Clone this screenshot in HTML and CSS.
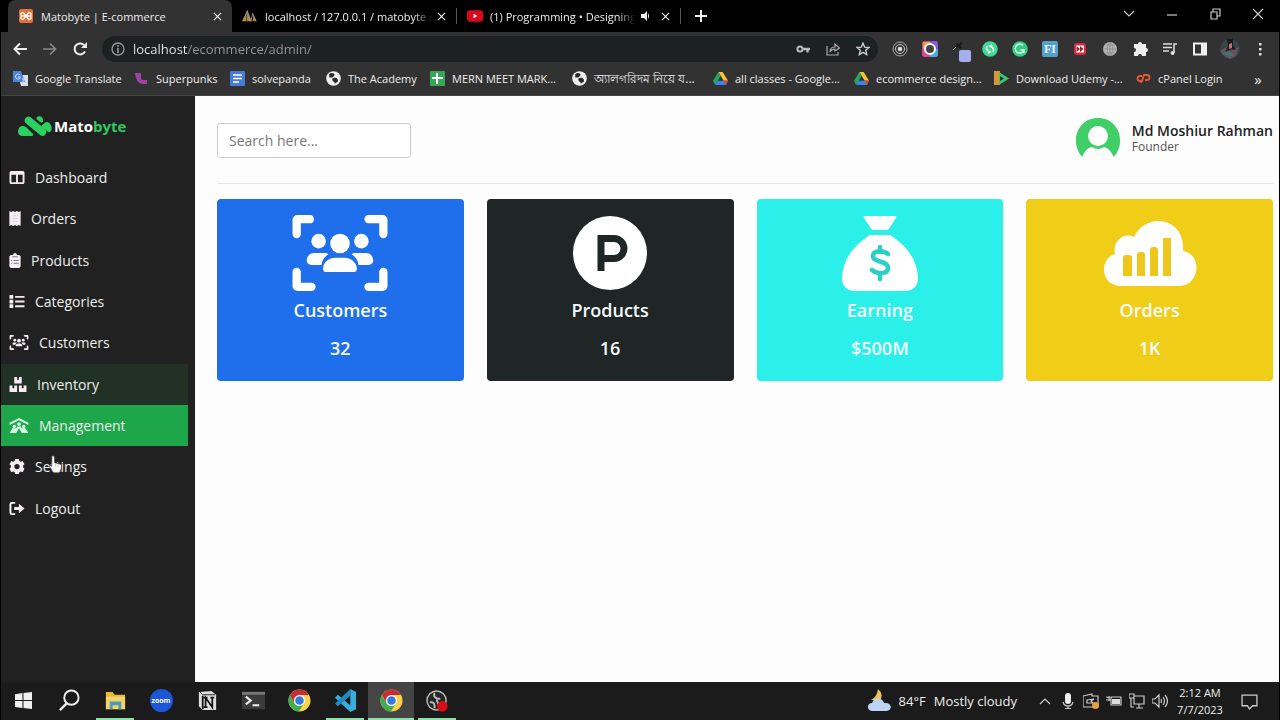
FILE: index.html
```html
<!DOCTYPE html>
<html lang="en">
<head>
<meta charset="utf-8">
<title>Matobyte | E-commerce</title>
<link rel="stylesheet" href="styles.css">
</head>
<body>
<svg class="defs" aria-hidden="true">
  <symbol id="i-customers" viewBox="0 0 640 512"><path d="M32 0h96a32 32 0 0 1 0 56H56v72a28 28 0 0 1-56 0V32A32 32 0 0 1 32 0zM608 0h-96a28 28 0 0 0 0 56h72v72a28 28 0 0 0 56 0V32a32 32 0 0 0-32-32zM32 512h96a28 28 0 0 0 0-56H56v-72a28 28 0 0 0-56 0v96a32 32 0 0 0 32 32zM608 512h-96a28 28 0 0 1 0-56h72v-72a28 28 0 0 1 56 0v96a32 32 0 0 1-32 32z"/><circle cx="176" cy="176" r="49"/><circle cx="464" cy="176" r="49"/><circle cx="320" cy="192" r="66"/><path d="M143 256h72c14 0 20 3 28 7-28 18-44 44-48 74h-67c-18 0-32-14-32-28 0-30 20-53 47-53zM497 256h-72c-14 0-20 3-28 7 28 18 44 44 48 74h67c18 0 32-14 32-28 0-30-20-53-47-53zM289 288h62c46 0 83 37 83 75 0 12-10 21-21 21H227c-12 0-21-9-21-21 0-42 37-75 83-75z"/></symbol>
  <symbol id="i-x" viewBox="0 0 10 10"><path d="M1 1l8 8M9 1L1 9" fill="none" stroke="currentColor" stroke-width="1.4"/></symbol>
  <symbol id="i-globe" viewBox="0 0 14 14"><circle cx="7" cy="7" r="6.8" fill="#eee"/><path d="M3 3c2-2 5-1 5 1L6 6 3 6zM6 7c3-2 6 0 5 3l-3 2c1-2-3-2-2-5z" fill="#292929"/></symbol>
  <symbol id="i-drive" viewBox="0 0 14 12"><path d="M5 0h4l5 8h-4z" fill="#f6c52c"/><path d="M5 0l2 4-5 8-2-4z" fill="#28a35c"/><path d="M4 8h10l-2 4H2z" fill="#3c80e8"/><path d="M10 8h4l-2 4z" fill="#d84532"/></symbol>
  <symbol id="i-chrome" viewBox="0 0 24 24"><circle cx="12" cy="12" r="11.5" fill="#f8d247"/><path d="M2 6.300A11.500 11.500 0 0 1 22 6.300H12L7 15z" fill="#c72c3b"/><path d="M2 6.300A11.500 11.500 0 0 0 11.500 23.500l5-8.500H7z" fill="#43ac52"/><circle cx="12" cy="12" r="5.800" fill="#fff"/><circle cx="12" cy="12" r="4.500" fill="#3779d8"/></symbol>
</svg>
<header class="browser">
  <div class="tabs">
    <div class="tab tab-active">
      <svg class="fav" viewBox="0 0 14 14"><rect width="14" height="14" rx="2" fill="#dd7439"/><path d="M7 7L5 4.500a1.700 1.700 0 1 0-1 2.500h6a1.700 1.700 0 1 0-1-2.500L5 9.500A1.700 1.700 0 1 1 4 7M7 7l2 2.500A1.700 1.700 0 1 0 10 7" fill="none" stroke="#fff" stroke-width="1.300"/></svg>
      <span class="tab-title">Matobyte | E-commerce</span>
      <button class="ico-btn" aria-label="Close tab"><svg class="x"><use href="#i-x"/></svg></button>
    </div>
    <div class="tab tab-db">
      <svg class="fav wide" viewBox="0 0 18 14"><path d="M0 13L5 3v10zM6 13V2l5 11zM12 13l1-8 3 8z" fill="#c28136"/><path d="M1 13L6 1v12M6 1l4 12 2-9 4 9" fill="none" stroke="#989898"/></svg>
      <span class="tab-title fade">localhost / 127.0.0.1 / matobyte /</span>
      <button class="ico-btn" aria-label="Close tab"><svg class="x"><use href="#i-x"/></svg></button>
    </div>
    <div class="tab tab-video">
      <svg class="fav wide" viewBox="0 0 17 14"><rect y="1" width="17" height="12" rx="3" fill="#d9081f"/><path d="M7 4.500l4 2.500-4 2.500z" fill="#fff"/></svg>
      <span class="tab-title fade">(1) Programming • Designing</span>
      <button class="ico-btn speaker" aria-label="Mute tab"><svg viewBox="0 0 10 10"><path d="M0 3h3l3-3v10L3 7H0zM7 2q2 3 0 6z" fill="#eee"/></svg></button>
      <button class="ico-btn" aria-label="Close tab"><svg class="x"><use href="#i-x"/></svg></button>
    </div>
    <button class="ico-btn new-tab" aria-label="New tab"><svg viewBox="0 0 12 12"><path d="M6 0v12M0 6h12" stroke="#eee" stroke-width="2"/></svg></button>
    <div class="window-controls">
      <button class="ico-btn" aria-label="Search tabs"><svg viewBox="0 0 12 12"><path d="M1 3l5 5 5-5" class="line"/></svg></button>
      <button class="ico-btn" aria-label="Minimize"><svg viewBox="0 0 12 12"><path d="M1 7h10" class="line"/></svg></button>
      <button class="ico-btn" aria-label="Restore"><svg viewBox="0 0 12 12"><path d="M2 4h6v7H2zM4 4V1h7v7H8" class="line"/></svg></button>
      <button class="ico-btn" aria-label="Close"><svg viewBox="0 0 12 12"><path d="M1 1l10 10M11 1L1 11" class="line"/></svg></button>
    </div>
  </div>
  <div class="toolbar">
    <div class="history">
      <button class="ico-btn" aria-label="Back"><svg viewBox="0 0 14 14"><path d="M14 7H2M7 1.500L1.500 7 7 12.500" fill="none" stroke="#eee" stroke-width="2"/></svg></button>
      <button class="ico-btn" aria-label="Forward"><svg viewBox="0 0 14 14"><path d="M0 7h12M7 1.500L12.500 7 7 12.500" fill="none" stroke="#888" stroke-width="1.700"/></svg></button>
      <button class="ico-btn" aria-label="Reload"><svg viewBox="0 0 14 14"><path d="M12 9.500A5.500 5.500 0 1 1 11 3" fill="none" stroke="#eee" stroke-width="2"/><path d="M14 0v6H8z" fill="#eee"/></svg></button>
    </div>
    <div class="address">
      <svg class="info" viewBox="0 0 14 14"><circle cx="7" cy="7" r="6" fill="none" stroke="#999" stroke-width="1.300"/><path d="M7 6v5M7 3v2" stroke="#999" stroke-width="1.600"/></svg>
      <input class="url" aria-label="Address" value="localhost/ecommerce/admin/">
      <button class="ico-btn" aria-label="Passwords"><svg viewBox="0 0 14 14"><circle cx="4" cy="7" r="2.600" fill="none" stroke="#bbb" stroke-width="2"/><path d="M7 7h7M11.500 7v3.500" stroke="#bbb" stroke-width="2.400"/></svg></button>
      <button class="ico-btn" aria-label="Share"><svg viewBox="0 0 14 14"><path d="M1 4v9h11v-3M4 10c0-4 2-5 5-5V2l4.500 4L9 9V7C7 7 5 8 4 10z" fill="none" stroke="#aaa" stroke-width="1.200"/></svg></button>
      <button class="ico-btn" aria-label="Bookmark"><svg viewBox="0 0 14 14"><path d="M7 1.200l1.700 4 4.300.3-3.300 2.800 1 4.200L7 10.300l-3.700 2.200 1-4.200L1 5.500l4.300-.3z" fill="none" stroke="#ccc" stroke-width="1.400"/></svg></button>
    </div>
    <div class="extensions">
      <button class="ico-btn" aria-label="Target"><svg viewBox="0 0 16 16"><circle cx="8" cy="8" r="7" fill="none" stroke="#aaa"/><circle cx="8" cy="8" r="4.500" fill="none" stroke="#ccc"/><circle cx="8" cy="8" r="2.300" fill="#ddd"/></svg></button>
      <button class="ico-btn" aria-label="Color picker"><svg viewBox="0 0 16 16"><rect width="16" height="16" rx="3" fill="#e24492"/><path d="M8 0h5a3 3 0 0 1 3 3v5H8z" fill="#8157dd"/><path d="M8 8h8v5a3 3 0 0 1-3 3H8z" fill="#45aadd"/><path d="M1 1h8L1 8z" fill="#e6a13c"/><circle cx="8" cy="8" r="5" fill="#444" stroke="#fff" stroke-width="2"/></svg></button>
      <button class="ico-btn" aria-label="Eyedropper"><svg viewBox="0 0 16 16" overflow="visible"><path d="M1 9l5-5M5 3l4 4M7 5l3-4" stroke="#10191a" stroke-width="2"/><path d="M1 9l3-3" stroke="#aaa"/><rect x="7" y="9" width="12" height="12" rx="2" fill="#a4afed"/></svg></button>
      <button class="ico-btn" aria-label="Sync"><svg viewBox="0 0 16 16"><circle cx="8" cy="8" r="7.800" fill="#3ddb94"/><path d="M5 5q-2 4 3 6l-2 1M11 11q2-4-3-6l2-1" fill="none" stroke="#fff" stroke-width="1.500"/></svg></button>
      <button class="ico-btn" aria-label="Grammar"><svg viewBox="0 0 16 16"><circle cx="8" cy="8" r="7.800" fill="#35cb87"/><path d="M11 4.500A4.500 4.500 0 1 0 12 9H8.500M12 9v3" fill="none" stroke="#ddfff0" stroke-width="1.500"/></svg></button>
      <button class="ico-btn badge-fi" aria-label="Font identifier">FI</button>
      <button class="ico-btn" aria-label="Skip"><svg viewBox="0 0 16 16"><rect x="2" y="2" width="12" height="12" rx="2" fill="#cf2b3b"/><rect x="4" y="4.500" width="8" height="7" fill="#fff"/><path d="M4.500 5l3.500 3-3.500 3zM8 5l3.500 3L8 11z" fill="#a71525"/></svg></button>
      <button class="ico-btn" aria-label="Web"><svg viewBox="0 0 16 16"><circle cx="8" cy="8" r="7" fill="#b5b5b5"/><path d="M1 8h14M8 1v14M3 4h10M3 12h10M8 1q-6 7 0 14M8 1q6 7 0 14" fill="none" stroke="#858585" stroke-width=".7"/></svg></button>
      <button class="ico-btn" aria-label="Extensions"><svg viewBox="0 0 16 16"><path d="M2 3h4a2 2 0 1 1 4 0h4v4a2 2 0 1 1 0 4v4h-4a2 2 0 1 0-4 0H2v-4a2 2 0 1 0 0-4z" fill="#eee"/></svg></button>
      <button class="ico-btn" aria-label="Media"><svg viewBox="0 0 16 16"><path d="M1 3h9M1 6.500h9M1 10h6M12 12V3h3" fill="none" stroke="#ddd" stroke-width="1.600"/><circle cx="10.500" cy="12" r="2" fill="#ddd"/></svg></button>
      <button class="ico-btn" aria-label="Side panel"><svg viewBox="0 0 16 16"><path d="M2 2.500h12v11H2z" fill="none" stroke="#eee" stroke-width="2"/><path d="M9 2h5v12H9z" fill="#eee"/></svg></button>
      <button class="ico-btn profile" aria-label="Profile"><svg viewBox="0 0 20 20"><circle cx="10" cy="10" r="10" fill="#354549"/><path d="M0 12l8-5 2 5 9-4-3 9-6 3-7-4z" fill="#67545b"/><path d="M7 0h6v6l3 5-5-1-6 4 3-8z" fill="#191d22"/><path d="M9 5l3-1v5l-3 1z" fill="#bb7469"/><path d="M3 14l5-2 6 4-5 2z" fill="#427073"/></svg></button>
      <button class="ico-btn" aria-label="Menu"><svg viewBox="0 0 16 16"><path d="M7 2h2.500v2.500H7zM7 7h2.500v2.500H7zM7 12h2.500v2.500H7z" fill="#ddd"/></svg></button>
    </div>
  </div>
  <nav class="bookmarks" aria-label="Bookmarks">
    <a href="#"><svg viewBox="0 0 15 15"><path d="M5 4h10v11H8z" fill="#dadfe5"/><path d="M0 0h8l4 11H0z" fill="#4b82dc"/><path d="M7 4a2.500 2.500 0 1 0 .5 2H5M9 8h4M11 7c0 3-1 4-3 5" fill="none" stroke="#c7dcff"/></svg>Google Translate</a>
    <a href="#"><svg viewBox="0 0 15 15"><path d="M1 2h6v5q0 2 2 2h4v4H8Q2 12 1 2z" fill="#9e43a2"/></svg>Superpunks</a>
    <a href="#"><svg viewBox="0 0 15 15"><rect width="15" height="15" rx="1" fill="#477bd8"/><path d="M3 4h9M3 7.500h9M3 11h6" stroke="#fff" stroke-width="1.600"/></svg>solvepanda</a>
    <a href="#"><svg><use href="#i-globe"/></svg>The Academy</a>
    <a href="#"><svg viewBox="0 0 15 15"><rect width="15" height="15" rx="1" fill="#36a853"/><path d="M7 2v11M2 7h11" stroke="#fff" stroke-width="2"/></svg>MERN MEET MARK...</a>
    <a href="#" lang="bn"><svg><use href="#i-globe"/></svg>অ্যালগরিদম নিয়ে য...</a>
    <a href="#"><svg><use href="#i-drive"/></svg>all classes - Google...</a>
    <a href="#"><svg><use href="#i-drive"/></svg>ecommerce design...</a>
    <a href="#"><svg viewBox="0 0 15 15"><path d="M0 0h6v14H0z" fill="#df9431"/><path d="M5 1l10 6.500L5 14z" fill="#36c777"/><path d="M6 5l4 2.500L6 10z" fill="#23382b"/></svg>Download Udemy -...</a>
    <a href="#"><svg viewBox="0 0 15 15"><path d="M6 5H4a2.500 2.500 0 0 0 0 5h2l2-6h3a2.500 2.500 0 0 1 0 5H9M8 4l-3 8" fill="none" stroke="#e65738" stroke-width="1.800"/></svg>cPanel Login</a>
    <button class="ico-btn more" aria-label="More bookmarks">»</button>
  </nav>
</header>

<div class="page">
  <aside class="sidebar">
    <a class="brand" href="#">
      <svg viewBox="0 0 34 20"><g fill="#2bd05f"><path d="M10.500 4.500l14 11.500" stroke="#2bd05f" stroke-width="7.500" stroke-linecap="round"/><path d="M1 12c2-3 5-2 7-1l7 7q1 2-2 2H5c-5 0-6-4-4-8z"/><path d="M19 1c3-2 7 0 6 5-2 1-3 0-4-1s-4-2-2-4z"/><path d="M24 9l4-3c4-1 7 5 5 9q-2 2-4 0l-5-4q-1-1 0-2z"/></g></svg>
      <span>Mato<b>byte</b></span>
    </a>
    <nav class="menu">
      <a href="#"><svg class="w16" viewBox="0 0 16 16"><path fill-rule="evenodd" d="M2 1h12a2 2 0 0 1 2 2v10a2 2 0 0 1-2 2H2a2 2 0 0 1-2-2V3a2 2 0 0 1 2-2zm0 4v8h5V5zm7 0v8h5V5z"/></svg>Dashboard</a>
      <a href="#"><svg class="w12" viewBox="0 0 12 16"><path d="M0 0l2 1 2-1 2 1 2-1 2 1 2-1v16l-2-1-2 1-2-1-2 1-2-1-2 1z"/><path d="M3 5h6M3 8h6M3 11h6" stroke="#d8d1d9"/></svg>Orders</a>
      <a href="#"><svg class="w12" viewBox="0 0 12 16"><path d="M1.500 2H4a2 2 0 0 1 4 0h2.500L12 3.500v11L10.500 16h-9L0 14.500v-11z"/><path d="M3 4h6M2 8h1M4.500 8H10M2 11h1M4.500 11H10" stroke="#777"/></svg>Products</a>
      <a href="#"><svg class="w16" viewBox="0 0 16 16"><path d="M0 1h4v4H0zM6 2h10v2H6zM0 6h4v4H0zM6 7h10v2H6zM0 11h4v4H0zM6 12h10v2H6z"/></svg>Categories</a>
      <a href="#"><svg class="w20"><use href="#i-customers"/></svg>Customers</a>
      <a href="#" class="tint"><svg class="w18" viewBox="0 0 18 16"><path d="M5 0h3v3h2V0h3v7H5zM0 9h3v3h2V9h3v7H0zM10 9h3v3h2V9h3v7h-8z"/></svg>Inventory</a>
      <a href="#" class="active"><svg class="w20" viewBox="0 0 20 16"><path d="M10 0l10 5v2.500L10 2.500 0 7.500V5z"/><circle cx="10" cy="6.500" r="2"/><circle cx="5" cy="9" r="1.800"/><circle cx="15" cy="9" r="1.800"/><path d="M0 16l3-5h4l1-2h4l1 2h4l3 5h-7l-3-5-3 5z"/></svg>Management</a>
      <a href="#"><svg class="w16" viewBox="0 0 16 16"><path fill-rule="evenodd" d="M6 0h4l.5 2 1.500 1 2-1 2 3.500L14.500 7v2l1.500 1.500-2 3.500-2-.7-1.500.9L10 16H6l-.5-1.800L4 13.300 2 14 0 10.500 1.500 9V7L0 5.500 2 2l2 1 1.500-1zm2 5.200a2.800 2.800 0 1 0 0 5.600 2.800 2.800 0 0 0 0-5.600z"/></svg>Settings</a>
      <a href="#"><svg class="w16" viewBox="0 0 16 16"><path d="M6 2H2.500Q1 2 1 3.500v9Q1 14 2.500 14H6" fill="none" stroke="#fff" stroke-width="2"/><path d="M5 6.500h5V3l6 5-6 5V9.500H5z"/></svg>Logout</a>
    </nav>
    <svg class="pointer" viewBox="0 0 14 20" aria-hidden="true"><path d="M3 1q2-1 3 1v6l7 2q1 1 0 5l-2 4H5l-4-6q-1-2 1-2l1 1z" fill="#fff" stroke="#333" stroke-width=".7"/><path d="M7 9v3M9.500 10v3" stroke="#aaa" stroke-width=".7"/></svg>
  </aside>

  <main class="main">
    <div class="topbar">
      <input class="search" type="search" placeholder="Search here..." aria-label="Search">
      <div class="user">
        <svg viewBox="0 0 46 40"><path d="M7 39C-6 23 3 0 23 0s29 23 16 39c-3-6-6-9-10-10q-6 4-12 0c-5 1-7 4-10 10z" fill="#40ce67"/><circle cx="23" cy="18" r="10" fill="#fff"/></svg>
        <div><p class="user-name">Md Moshiur Rahman</p><p class="user-role">Founder</p></div>
      </div>
    </div>
    <section class="cards">
      <article class="card blue"><svg><use href="#i-customers"/></svg><h2>Customers</h2><p>32</p></article>
      <article class="card dark"><svg viewBox="0 0 76 76"><circle cx="38" cy="38" r="37"/><path d="M29 56V23.500h13a9.500 9.500 0 0 1 0 20H29" fill="none" stroke="#202526" stroke-width="7"/></svg><h2>Products</h2><p>16</p></article>
      <article class="card cyan"><svg viewBox="0 0 76 76"><path d="M22 3q-1-2 1-2h30q2 0 1 2l-8 12H30zM28 20h20c17 11 27 24 28 43 0 8-5 13-13 13H13C5 76 0 71 0 63 1 44 11 31 28 20z"/><path d="M46 39c-5-4-15-4-15 2 0 7 15 4 15 12 0 6-10 7-16 2M38 32v5M38 59v5" fill="none" stroke="#2ccfc6" stroke-width="4.500" stroke-linecap="round"/></svg><h2>Earning</h2><p>$500M</p></article>
      <article class="card yellow"><svg viewBox="0 0 92 76"><path d="M17 71C7 71 0 64 0 55c0-8 4-14 11-16-3-13 9-22 19-17C42-4 82 2 79 36c20 3 17 35-4 35z"/><path d="M19 43q0-3 3-3h3q3 0 3 3v18h-9zM33 40q0-3 3-3h2q3 0 3 3v21h-8zM46 35q0-3 3-3h2q3 0 3 3v26h-8zM59 23h8v38h-8z" fill="#edc71b"/></svg><h2>Orders</h2><p>1K</p></article>
    </section>
  </main>
</div>

<footer class="taskbar">
  <div class="apps">
    <button class="app" aria-label="Start"><svg viewBox="0 0 16 16"><path d="M0 2l7-1v6.500H0zM8 1l8-1v7.500H8zM0 8.500h7V15l-7-1zM8 8.500h8V16l-8-1z" fill="#eee"/></svg></button>
    <button class="app" aria-label="Search"><svg class="big" viewBox="0 0 24 24"><circle cx="14" cy="9" r="7.500" fill="none" stroke="#eee" stroke-width="2"/><path d="M9 15l-7 7" stroke="#eee" stroke-width="2.500"/></svg></button>
    <button class="app open" aria-label="Files"><svg class="big" viewBox="0 0 24 24"><path d="M2 3h7l2 3h11v15H2z" fill="#e9b934"/><path d="M2 8h20v13H2z" fill="#f2d46d"/><path d="M6 21v-8h12v8h-3v-4H9v4z" fill="#5199b7"/></svg></button>
    <button class="app" aria-label="Zoom"><span class="zoom-logo">zoom</span></button>
    <button class="app" aria-label="Notion"><svg class="big" viewBox="0 0 24 24"><path d="M3 3l13-1 5 4v16H7l-4-4z" fill="#ddd"/><path d="M4 3l3 3h13" fill="none" stroke="#222"/><path d="M7 7v14M10 19V9l7 10V9M8 9h4M15 9h4M8 19h4" fill="none" stroke="#111" stroke-width="1.800"/></svg></button>
    <button class="app" aria-label="Terminal"><svg class="big" viewBox="0 0 24 24"><rect y="3" width="24" height="18" fill="#3b3b3b"/><path d="M0 3h24v3H0z" fill="#777"/><path d="M4 8l5 4-5 4M11 17h7" fill="none" stroke="#eee" stroke-width="2.200"/></svg></button>
    <button class="app" aria-label="Chrome"><svg class="big"><use href="#i-chrome"/></svg></button>
    <button class="app open" aria-label="Code editor"><svg class="big" viewBox="0 0 24 24"><path d="M17 0l6 3v18l-6 3L1 9l3-3 13 11z" fill="#3aacdc"/><path d="M17 0v7L4 18l-3-3z" fill="#2388bd"/></svg></button>
    <button class="app open current" aria-label="Chrome window"><svg class="big"><use href="#i-chrome"/></svg></button>
    <button class="app open" aria-label="OBS recording"><svg class="big" viewBox="0 0 24 24"><circle cx="11" cy="12" r="10" fill="#252525" stroke="#bbb" stroke-width="1.500"/><path d="M9 4c-2 4 2 7 6 6M4 14c5-1 5 2 5 6M11 11l2 5" fill="none" stroke="#bbb" stroke-width="2"/><circle cx="17" cy="18" r="5.500" fill="#d90e15"/></svg></button>
  </div>
  <div class="tray">
    <button class="weather"><svg viewBox="0 0 24 24"><path d="M11 0q6 5 2 12l-9-1Q10 8 11 0z" fill="#e8c560"/><path d="M5 22c-6-1-5-8 0-8 2-6 11-5 12 0 8-1 9 7 3 8z" fill="#bfd4f3"/></svg><span>84°F</span><span>Mostly cloudy</span></button>
    <div class="status">
      <button class="ico-btn" aria-label="Hidden icons"><svg viewBox="0 0 16 16"><path d="M3 11l5-5 5 5" class="line"/></svg></button>
      <button class="ico-btn" aria-label="Microphone"><svg viewBox="0 0 16 16"><rect x="5" y="0" width="6" height="11" rx="3" fill="#eee"/><path d="M3 9q1 4 5 4t5-4M8 13v3M5 15.500h6" class="line"/></svg></button>
      <button class="ico-btn" aria-label="Updates"><svg viewBox="0 0 16 16"><path d="M0 3l9-2v2h6v11H0zM4 7l7-1-3 2 2 2H4z" class="line"/><circle cx="12.500" cy="12.500" r="3.500" fill="#e5a137"/></svg></button>
      <button class="ico-btn" aria-label="Battery"><svg viewBox="0 0 16 16"><path d="M5 4h10v8H5zM0 4l4 1M0 7h5M3 3v5" class="line"/><path d="M6 6h8v5H6z" fill="#ddd"/></svg></button>
      <button class="ico-btn" aria-label="Network"><svg viewBox="0 0 16 16"><path d="M5 3h10v8H5zM10 11v4M7 15h7M0 1h5v4H0zM2 5v9h3" class="line"/></svg></button>
      <button class="ico-btn" aria-label="Volume"><svg viewBox="0 0 16 16"><path d="M0 6h3l4-4v12l-4-4H0zM9 6q1 2 0 4M11 4q3 4 0 8M13 2q5 6 0 12" class="line"/></svg></button>
    </div>
    <div class="clock"><time>2:12 AM</time><time>7/7/2023</time></div>
    <button class="ico-btn" aria-label="Notifications"><svg viewBox="0 0 16 16"><path d="M1 2h14v10h-4l-3 3-2-3H1z" class="line"/></svg></button>
  </div>
</footer>
</body>
</html>
```
FILE: styles.css
```css
* { box-sizing: border-box; }
body {
  margin: 0;
  min-height: 100vh;
  display: flex;
  flex-direction: column;
  background: #000;
  border-left: 1px solid #000;
  border-right: 1px solid #000;
  font-family: "Open Sans", "Noto Sans", sans-serif;
  font-size: 12px;
  color: #eee;
}
p, h2 { margin: 0; }
a { color: inherit; text-decoration: none; }
button, input { font: inherit; color: inherit; }
button { border: 0; padding: 0; background: none; }
svg { display: block; flex: none; fill: currentColor; }
.defs { position: absolute; width: 0; height: 0; }
.line { fill: none; stroke: #ccc; stroke-width: 1.2; }
.ico-btn { display: grid; place-items: center; flex: none; width: 30px; }
.ico-btn svg { width: 14px; height: 14px; }

/* browser chrome */
.browser { background: #323232; }
.tabs { display: flex; align-items: stretch; height: 32px; background: #000; }
.tab { display: flex; align-items: center; font-size: 11px; }
.tab .ico-btn { width: 16px; }
.tab-active { width: 224px; margin-left: 7px; padding: 0 7px 0 11px; background: #323232; border-radius: 7px 7px 0 0; }
.tab-db { width: 225px; padding: 0 7px 0 10px; }
.tab-video { width: 224px; padding: 0 7px 0 10px; }
.tab-db, .tab-video { height: 16px; align-self: center; border-right: 1px solid #555; }
.fav { width: 14px; height: 14px; margin-right: 8px; }
.fav.wide { width: 16px; margin-right: 7px; }
.tab-title { flex: 1; white-space: nowrap; overflow: hidden; }
.fade { mask-image: linear-gradient(to right, #000 88%, transparent); }
.tab .x { width: 9px; height: 9px; }
.tab .speaker { width: 22px; }
.speaker svg { width: 10px; height: 10px; }
.new-tab { width: 40px; }
.new-tab svg { width: 12px; height: 12px; }
.window-controls { display: flex; margin-left: auto; padding-bottom: 5px; }
.window-controls .ico-btn { width: 43px; }
.window-controls svg { width: 12px; height: 12px; }

.toolbar { display: flex; align-items: center; height: 33px; }
.history { display: flex; padding: 0 7px 0 4px; }
.address { flex: 1; display: flex; align-items: center; height: 26px; padding-left: 9px; border-radius: 13px; background: #1e2121; }
.info { width: 14px; height: 14px; margin-right: 8px; }
.url {
  flex: 1;
  min-width: 0;
  padding: 0;
  border: 0;
  font-size: 13px;
  color: transparent;
  background: linear-gradient(to right, #eee 55px, #999 55px);
  background-clip: text;
}
.extensions { display: flex; padding: 0 4px 0 7px; }
.extensions svg { width: 16px; height: 16px; }
.extensions .profile svg { width: 20px; height: 20px; }
.badge-fi { width: 16px; height: 16px; margin: 2px 7px; border-radius: 2px; background: #559fcb; color: #e4f6ff; font: 700 12px/16px "Liberation Serif", serif; }

.bookmarks {
  display: grid;
  grid-template-columns: 121px 96px 96px 104px 142px 141px 141px 140px 142px 1fr 42px;
  align-items: center;
  height: 31px;
  padding: 0 0 3px 12px;
  border-bottom: 1px solid #444;
  font-size: 11px;
}
.bookmarks a { display: flex; align-items: center; gap: 7px; white-space: nowrap; }
.bookmarks a:lang(bn) { font-size: 12px; line-height: 16px; }
.bookmarks svg { width: 15px; height: 15px; }
.more { width: 42px; font-size: 15px; line-height: 16px; }

/* admin page */
.page { flex: 1; display: flex; background: #fdfdfd; }
.sidebar { position: relative; flex: none; width: 194px; background: #212121; }
.brand { display: flex; align-items: center; gap: 2px; padding: 20px 17px 0; font-size: 15px; font-weight: 700; line-height: 20px; color: #fff; }
.brand svg { width: 34px; height: 20px; }
.brand b { color: #2dcb62; font-weight: 700; }
.menu { display: grid; grid-auto-rows: 1fr; height: 372px; margin: 21px 7px 0 0; font-size: 14px; }
.menu a { display: flex; align-items: center; gap: 10px; padding-left: 8px; }
.menu svg { height: 15px; fill: #f6edf5; }
.w12 { width: 12px; }
.w16 { width: 16px; }
.w18 { width: 18px; }
.w20 { width: 20px; }
.menu .tint { background: #213126; }
.menu .active { background: #1da64a; }
.menu .active svg { fill: #dcffe5; }
.pointer { position: absolute; left: 48px; top: 359px; width: 13px; height: 19px; }

.main { flex: 1; padding: 0 6px 0 22px; }
.topbar { display: flex; justify-content: space-between; align-items: flex-start; height: 88px; padding-top: 22px; border-bottom: 1px solid #e6e6e6; color: #222; }
.search { width: 194px; height: 35px; margin-top: 5px; padding: 0 11px; border: 1px solid #ccc; border-radius: 3px; background: #fff; font-size: 14px; outline: 0; }
.search::placeholder { color: #777; opacity: 1; }
.user { display: flex; gap: 11px; }
.user svg { width: 46px; height: 40px; }
.user div { padding-top: 4px; }
.user-name { font-size: 14px; font-weight: 600; line-height: 18px; }
.user-role { font-size: 12px; line-height: 14px; color: #555; }
.cards { display: grid; grid-template-columns: repeat(4, 1fr); gap: 23px; padding-top: 15px; }
.card { display: flex; flex-direction: column; align-items: center; padding: 16px 0 21px; border-radius: 4px; color: #f5fbff; }
.card svg { width: 96px; height: 76px; fill: #fff; }
.card h2, .card p { font-size: 18px; font-weight: 600; line-height: 24px; }
.card h2 { margin: 7px 0 14px; }
.blue { background: #1f6eec; }
.dark { background: #202526; }
.cyan { background: #2bf0e9; }
.yellow { background: #f0cd17; }

/* taskbar */
.taskbar { display: flex; justify-content: space-between; height: 38px; background: #1a1b1a; }
.apps { display: flex; margin-left: -1px; }
.app { display: grid; place-items: center; width: 46px; border-bottom: 2px solid transparent; }
.app svg { width: 17px; height: 17px; }
.app .big { width: 23px; height: 23px; }
.app.open { width: 38px; margin: 0 4px; border-color: #8be3aa; }
.app.current { width: 46px; margin: 0; background: #454545; }
.zoom-logo { width: 23px; border-radius: 50%; background: #1c57d8; color: #fff; font-size: 7px; font-weight: 700; line-height: 23px; }
.tray { display: flex; align-items: center; padding-right: 10px; }
.weather { display: flex; align-items: center; gap: 8px; margin-right: 16px; font-size: 13px; }
.weather svg { width: 24px; height: 24px; }
.status { display: flex; }
.status .ico-btn { width: 23px; }
.status svg { width: 16px; height: 16px; }
.clock { display: grid; justify-items: center; width: 58px; font-size: 11px; line-height: 17px; }
.tray > .ico-btn svg { width: 17px; height: 17px; }
.clock + .ico-btn { width: 40px; }
```
